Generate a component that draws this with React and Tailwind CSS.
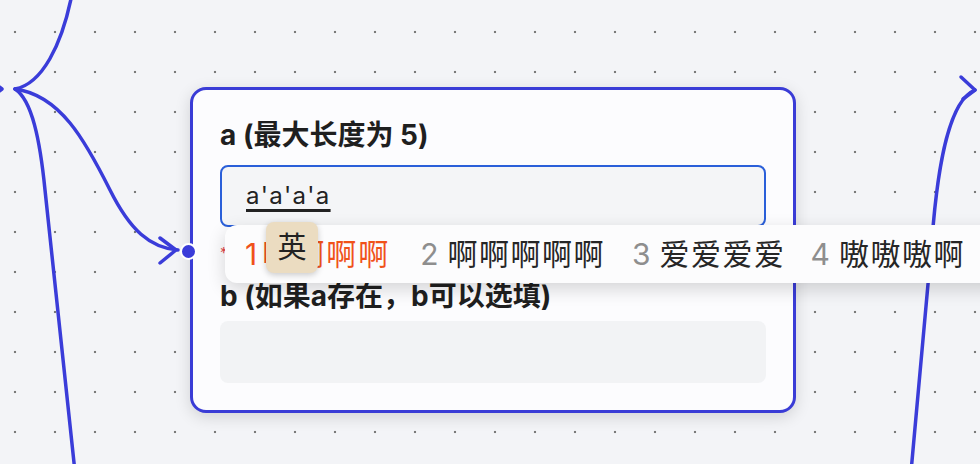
import React from 'react'

const FONT = "font-['Inter','Noto_Sans_CJK_SC',sans-serif]"

const candidates = [
  { n: '2', text: '啊啊啊啊啊', gap: 'ml-[30px]' },
  { n: '3', text: '爱爱爱爱', gap: 'ml-[27px]' },
  { n: '4', text: '嗷嗷嗷啊', gap: 'ml-[25px]' },
]

const Edges = () => (
  <svg className="absolute inset-0" width="980" height="464" viewBox="0 0 980 464" fill="none">
    <g stroke="#3a3cd9" strokeWidth="3.5" strokeLinecap="round" strokeLinejoin="round">
      {/* left brace */}
      <path d="M72 -6 C62 45 42 84 15 89" />
      <path d="M15 89 C60 95 85 140 110 190 C130 230 150 248 178 250" />
      <path d="M15 89 C32 100 40 140 45 190 L75 472" />
      <path d="M-6 83 L2 89 L-6 95" />
      <path d="M160 238 L176 250 L160 263" />
      {/* right edge */}
      <path d="M911 472 L932 240 C938 160 950 100 975 90" />
      <path d="M961 77 L975 90 L963 99" />
    </g>
  </svg>
)

const CandidateBar = () => (
  <div className="absolute left-[225px] top-[225px] right-[-40px] h-[58px] rounded-xl bg-[#fcfcfd] shadow-[0_6px_18px_rgba(0,0,0,0.16)] flex items-center pl-5">
    <div className="flex items-center gap-[5px] text-[#f0521a]">
      <span className="text-[30px] leading-none">1</span>
      <span className="text-[30px] tracking-[2px] leading-none">啊啊啊啊</span>
    </div>
    {candidates.map((c) => (
      <div key={c.n} className={`flex items-center gap-[9px] ${c.gap}`}>
        <span className="text-[30px] leading-none text-[#8e8e8e]">{c.n}</span>
        <span className="text-[30px] tracking-[1.5px] leading-none text-[#262626]">{c.text}</span>
      </div>
    ))}
    <div className="absolute left-[41px] top-[-3px] w-[52px] h-[51px] rounded-lg bg-[#ebdcc1] shadow-[0_2px_6px_rgba(0,0,0,0.2)] flex items-center justify-center text-[29px] text-[#222]">
      英
    </div>
  </div>
)

const App = () => {
  return (
    <div
      className={`relative w-[980px] h-[464px] overflow-hidden bg-[#f3f4f7] bg-[radial-gradient(circle,#7a7a7a_1.2px,transparent_1.6px)] bg-[length:40px_40px] bg-[position:-5px_12px] ${FONT}`}
    >
      <Edges />

      {/* form node */}
      <div className="absolute left-[190px] top-[87px] w-[606px] h-[326px] rounded-[16px] border-[3px] border-[#3a3cd6] bg-[#fcfcfe] shadow-[0_4px_16px_rgba(0,0,0,0.14)] px-[27px] pt-[28px] flex flex-col">
        <div className="text-[28px] font-bold leading-[34px] text-[#1f1f1f]">a (最大长度为 5)</div>
        <div className="mt-[13px] h-[62px] rounded-lg border-2 border-[#2a5fd9] bg-[#f4f5f7] flex items-center pl-6">
          <span className="text-[24px] tracking-[1.3px] underline decoration-[3px] underline-offset-[5px] text-[#222]">a'a'a'a</span>
        </div>
        <div className="h-[52px] flex items-center text-[15px] text-[#e5484d]">* 最大长度为 5</div>
        <div className="text-[28px] font-bold leading-[34px] text-[#1f1f1f]">b (如果a存在，b可以选填)</div>
        <div className="mt-[8px] h-[62px] rounded-lg bg-[#f2f3f5]"></div>

        {/* handle */}
        <div className="absolute left-[-13px] top-[153px] w-[17px] h-[17px] rounded-full bg-[#3a3cd9] border-2 border-white"></div>
      </div>

      <CandidateBar />
    </div>
  )
}

export default App
